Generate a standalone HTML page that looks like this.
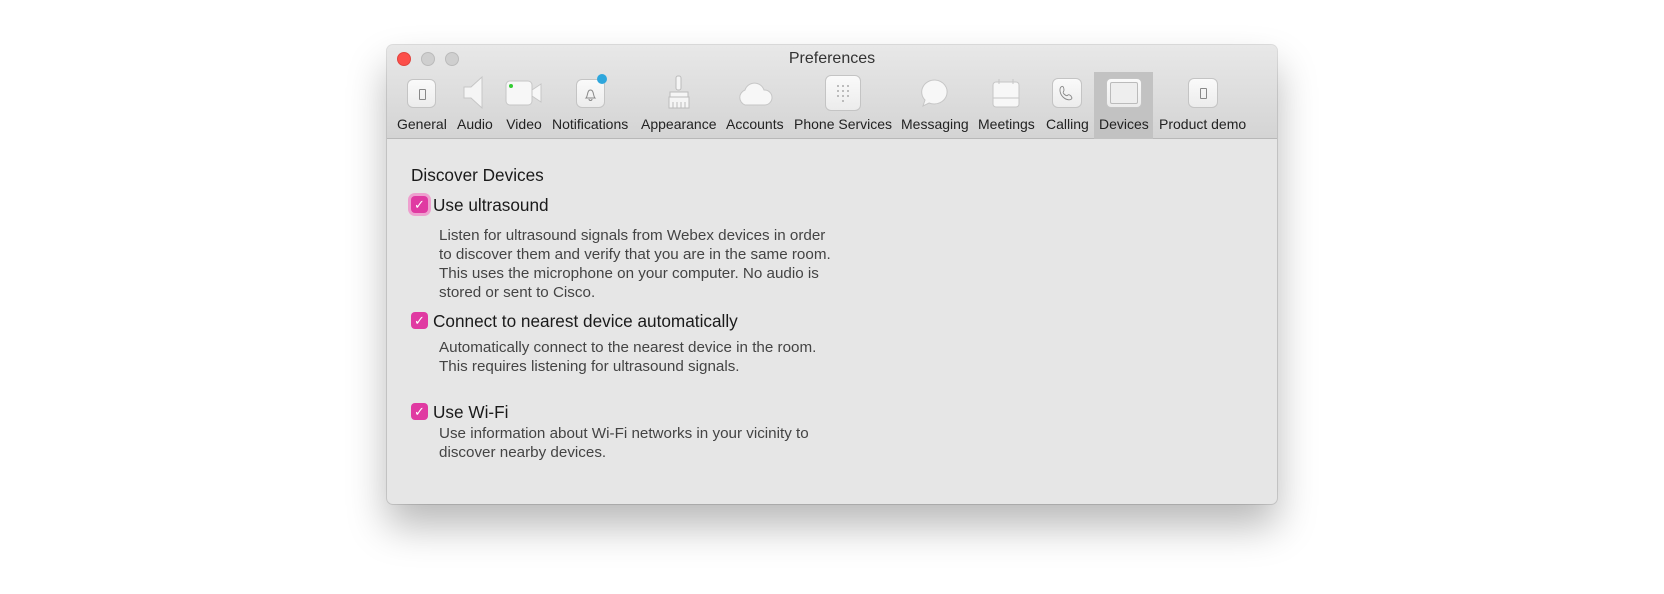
<!DOCTYPE html>
<html><head><style>
body{margin:0;width:1664px;height:594px;background:#fff;position:relative;overflow:hidden;font-family:"Liberation Sans",sans-serif;}
.win{position:absolute;left:387px;top:45px;width:890px;height:459px;border-radius:6px;background:#e6e6e6;box-shadow:0 22px 40px rgba(0,0,0,0.28),0 0 0 1px rgba(0,0,0,0.12);overflow:hidden}
.tb{position:absolute;left:0;top:0;width:890px;height:93px;background:linear-gradient(#e8e8e8,#d4d4d4);border-bottom:1px solid #b8b8b8}
.a{position:absolute;white-space:nowrap}
.dot{position:absolute;top:7px;width:14px;height:14px;border-radius:50%;background:#cfcfcf;border:0.5px solid #bbb;box-sizing:border-box}
.it{position:absolute;top:29px;display:flex;flex-direction:column;align-items:center}
.ic{height:38px;display:flex;align-items:center;justify-content:center;position:relative}
.lbl{font-size:14px;color:#222;white-space:nowrap;margin-top:4px}
.btn{position:relative;background:linear-gradient(#fafafa,#ececec);border:1px solid #c4c4c4;border-radius:6px;box-sizing:border-box}
.cb{position:absolute;width:17px;height:17px;border-radius:4px;background:#e03aa2;color:#fff;font-size:13px;line-height:17px;text-align:center}
.h{font-size:17.2px;color:#1a1a1a}
.d{font-size:15.2px;color:#444;line-height:19px}
.sq{position:absolute;left:11px;top:9px;width:5px;height:9px;border:1px solid #888;border-radius:1px}
</style></head><body>
<div class="win">
 <div class="tb">
  <div class="dot" style="left:10px;background:#fc4f4a;border-color:#e0443e"></div>
  <div class="dot" style="left:34px"></div>
  <div class="dot" style="left:58px"></div>
  <div class="a" style="left:0;width:890px;text-align:center;top:5px;font-size:16px;color:#333">Preferences</div>
  <div style="position:absolute;left:707px;top:27px;width:59px;height:67px;background:#c2c2c2"></div>

  <div class="it" style="left:10px"><div class="ic"><div class="btn" style="width:29px;height:29px"><div class="sq"></div></div></div><div class="lbl">General</div></div>
  <div class="it" style="left:70px"><div class="ic"><svg width="26" height="34"><path d="M2 11h7l11-10v31L9 22H2z" fill="#f5f5f5" stroke="#c6c6c6"/></svg></div><div class="lbl">Audio</div></div>
  <div class="it" style="left:118px"><div class="ic"><svg width="38" height="26"><rect x="1" y="1" width="26" height="24" rx="4" fill="#f7f7f7" stroke="#c6c6c6"/><circle cx="6" cy="6" r="2" fill="#3c3"/><path d="M27 10l9-6v18l-9-6z" fill="#f7f7f7" stroke="#c6c6c6"/></svg></div><div class="lbl">Video</div></div>
  <div class="it" style="left:165px"><div class="ic"><div class="btn" style="width:29px;height:29px"><svg width="27" height="27"><path d="M9 18c2-2 1-8 4.5-8s2.5 6 4.5 8zM12 19a1.5 1.5 0 0 0 3 0" fill="none" stroke="#888"/></svg><div style="position:absolute;left:20px;top:-6px;width:10px;height:10px;border-radius:50%;background:#2ea6dc"></div></div></div><div class="lbl">Notifications</div></div>
  <div class="it" style="left:254px"><div class="ic"><svg width="26" height="36"><rect x="10" y="1" width="5" height="14" rx="2" fill="#f5f5f5" stroke="#bbb"/><path d="M4 17h18v5H4z" fill="#f5f5f5" stroke="#bbb"/><path d="M3 22h20v11H3z" fill="#f5f5f5" stroke="#bbb"/><path d="M7 27v6M11 27v6M15 27v6M19 27v6" stroke="#bbb"/></svg></div><div class="lbl">Appearance</div></div>
  <div class="it" style="left:339px"><div class="ic"><svg width="38" height="26"><path d="M9 25a8 8 0 0 1 0-15 10 10 0 0 1 19 0 7.5 7.5 0 0 1 1 15z" fill="#f7f7f7" stroke="#c6c6c6"/></svg></div><div class="lbl">Accounts</div></div>
  <div class="it" style="left:407px"><div class="ic"><div class="btn" style="width:36px;height:36px"><svg width="34" height="34" fill="#aaa"><circle cx="12" cy="10" r="1"/><circle cx="17" cy="10" r="1"/><circle cx="22" cy="10" r="1"/><circle cx="12" cy="15" r="1"/><circle cx="17" cy="15" r="1"/><circle cx="22" cy="15" r="1"/><circle cx="12" cy="20" r="1"/><circle cx="17" cy="20" r="1"/><circle cx="22" cy="20" r="1"/><circle cx="17" cy="25" r="1"/></svg></div></div><div class="lbl">Phone Services</div></div>
  <div class="it" style="left:514px"><div class="ic"><svg width="30" height="30"><path d="M15 2a13 12 0 1 1-6 23l-6 3 2-6A13 12 0 0 1 15 2z" fill="#f7f7f7" stroke="#c6c6c6"/></svg></div><div class="lbl">Messaging</div></div>
  <div class="it" style="left:591px"><div class="ic"><svg width="30" height="32"><rect x="2" y="5" width="26" height="25" rx="3" fill="#f7f7f7" stroke="#c6c6c6"/><path d="M2 21h26M8 2v5M22 2v5" stroke="#c6c6c6"/></svg></div><div class="lbl">Meetings</div></div>
  <div class="it" style="left:659px"><div class="ic"><div class="btn" style="width:30px;height:30px"><svg width="28" height="28"><path d="M8 8c2-2 3 1 3 3s-2 2 0 4 3 2 4 1 3 1 3 1l1 2c-1 3-6 2-9-1s-4-8-2-10z" fill="none" stroke="#888" stroke-width="0.9"/></svg></div></div><div class="lbl">Calling</div></div>
  <div class="it" style="left:712px"><div class="ic"><div class="btn" style="width:36px;height:30px;border-radius:5px"><div style="position:absolute;left:3px;top:3px;width:28px;height:22px;border:1px solid #bbb;border-radius:2px;box-sizing:border-box;background:#eee"></div></div></div><div class="lbl">Devices</div></div>
  <div class="it" style="left:772px"><div class="ic"><div class="btn" style="width:30px;height:30px"><div class="sq"></div></div></div><div class="lbl">Product demo</div></div>
 </div>
 <div class="a h" style="left:24px;top:120px">Discover Devices</div>
 <div class="cb" style="left:24px;top:151px;box-shadow:0 0 0 3px #eea0cf">✓</div>
 <div class="a h" style="left:46px;top:150px">Use ultrasound</div>
 <div class="a d" style="left:52px;top:181px">Listen for ultrasound signals from Webex devices in order<br>to discover them and verify that you are in the same room.<br>This uses the microphone on your computer. No audio is<br>stored or sent to Cisco.</div>
 <div class="cb" style="left:24px;top:267px">✓</div>
 <div class="a h" style="left:46px;top:266px">Connect to nearest device automatically</div>
 <div class="a d" style="left:52px;top:293px">Automatically connect to the nearest device in the room.<br>This requires listening for ultrasound signals.</div>
 <div class="cb" style="left:24px;top:358px">✓</div>
 <div class="a h" style="left:46px;top:357px">Use Wi-Fi</div>
 <div class="a d" style="left:52px;top:379px">Use information about Wi-Fi networks in your vicinity to<br>discover nearby devices.</div>
</div>
</body></html>
